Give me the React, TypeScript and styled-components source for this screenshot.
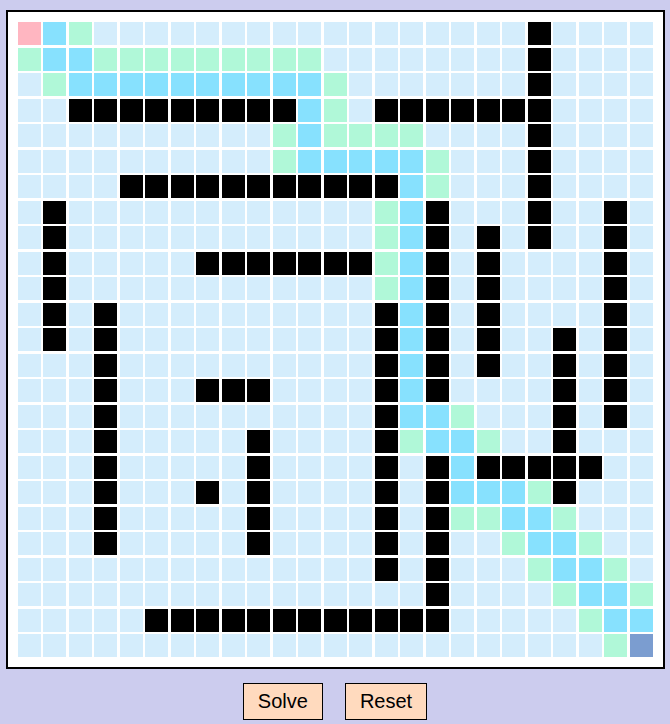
import React, { useState } from 'react';
import styled, { createGlobalStyle } from 'styled-components';

type CellKind = '.' | '#' | 'B' | 'G' | 'S' | 'E';

const MAZE = [
  'SBG.................#....',
  'GBBGGGGGGGGG........#....',
  '.GBBBBBBBBBBG.......#....',
  '..#########BG.#######....',
  '..........GBGGGG....#....',
  '..........GBBBBBG...#....',
  '....###########BG...#....',
  '.#............GB#...#..#.',
  '.#............GB#.#.#..#.',
  '.#.....#######GB#.#....#.',
  '.#............GB#.#....#.',
  '.#.#..........#B#.#....#.',
  '.#.#..........#B#.#..#.#.',
  '...#..........#B#.#..#.#.',
  '...#...###....#B#....#.#.',
  '...#..........#BBG...#.#.',
  '...#.....#....#GBBG..#...',
  '...#.....#....#.#B#####..',
  '...#...#.#....#.#BBBG#...',
  '...#.....#....#.#GGBBG...',
  '...#.....#....#.#..GBBG..',
  '..............#.#...GBBG.',
  '................#....GBBG',
  '.....############.....GBB',
  '.......................GE',
];

const COLORS: Record<CellKind, string> = {
  '.': '#d4edfc',
  '#': '#000000',
  B: '#87e1fe',
  G: '#b0f8d8',
  S: '#ffb6c1',
  E: '#7b9dd0',
};

const GlobalStyle = createGlobalStyle`
  html, body {
    margin: 0;
    padding: 0;
    background: #ccccee;
    font-family: "Liberation Sans", Arial, sans-serif;
  }
`;

export default function App() {
  const [grid, setGrid] = useState<CellKind[][]>(() =>
    MAZE.map((row) => row.split('') as CellKind[])
  );

  const handleReset = () => {
    setGrid(MAZE.map((row) => row.split('').map((c) => (c === 'B' || c === 'G' ? '.' : c)) as CellKind[]));
  };

  const handleSolve = () => {
    setGrid(MAZE.map((row) => row.split('') as CellKind[]));
  };

  return (
    <Page>
      <GlobalStyle />
      <Board>
        {grid.map((row, r) =>
          row.map((kind, c) => <Cell key={`${r}-${c}`} kind={kind} />)
        )}
      </Board>
      <Controls>
        <ActionButton onClick={handleSolve}>Solve</ActionButton>
        <ActionButton onClick={handleReset}>Reset</ActionButton>
      </Controls>
    </Page>
  );
}

const Page = styled.main`
  display: flex;
  flex-direction: column;
  align-items: center;
  padding-top: 10px;
`;

const Board = styled.section`
  display: grid;
  grid-template-columns: repeat(25, 23px);
  grid-auto-rows: 23px;
  gap: 2.5px;
  padding: 10px;
  background: #ffffff;
  border: 2px solid #000000;
`;

const Cell = styled.div<{ kind: CellKind }>`
  background: ${({ kind }) => COLORS[kind]};
`;

const Controls = styled.div`
  display: flex;
  gap: 22px;
  margin-top: 14px;
`;

const ActionButton = styled.button`
  height: 37px;
  min-width: 80px;
  padding: 0 14px;
  background: #ffdabe;
  border: 1px solid #000000;
  font-family: "Liberation Sans", Arial, sans-serif;
  font-size: 20px;
  color: #000000;
  cursor: pointer;
`;
